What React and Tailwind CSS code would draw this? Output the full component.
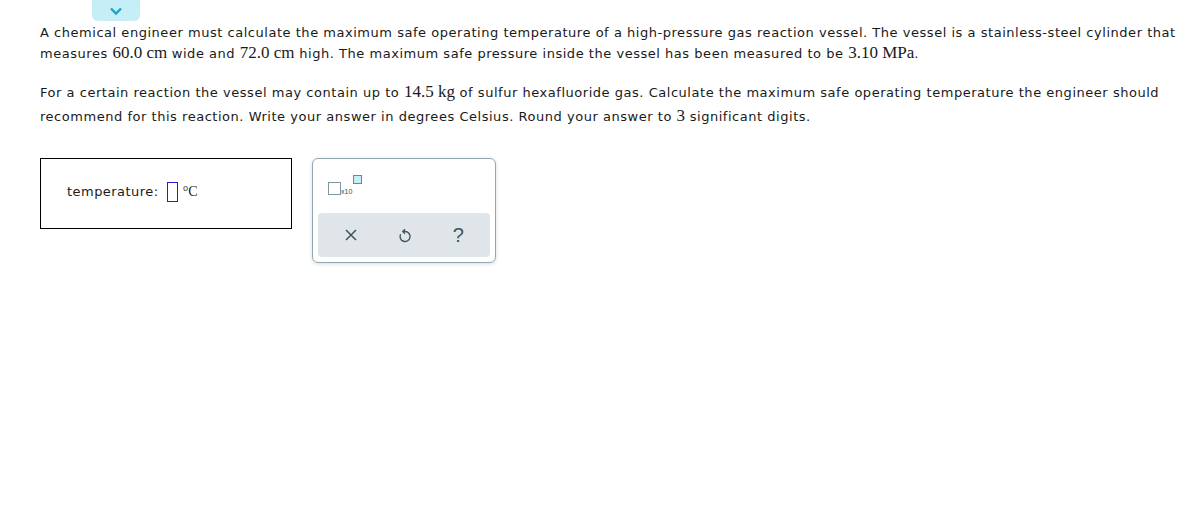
import React from 'react';

const M = ({ children }) => (
  <span className="text-[17px] leading-none tracking-normal" style={{ fontFamily: '"Liberation Serif", serif' }}>{children}</span>
);

export default function App() {
  return (
    <div className="w-[1188px] h-[506px] bg-white text-[#1a1a1a] relative" style={{ fontFamily: '"DejaVu Sans", Verdana, sans-serif' }}>
      {/* collapse tab */}
      <div className="absolute left-[92px] top-0 w-[48px] h-[21px] bg-[#c6eef6] rounded-b-[6px] flex items-center justify-center">
        <svg width="14" height="10" viewBox="0 0 14 10">
          <path d="M2 2.5 L7 7.5 L12 2.5" fill="none" stroke="#1ba3c8" strokeWidth="2.4" />
        </svg>
      </div>

      <div className="pl-[40px] pr-[6px] pt-[22px] text-[13px] tracking-[0.53px]">
        <p className="leading-[21px]">
          A chemical engineer must calculate the maximum safe operating temperature of a high-pressure gas reaction vessel. The vessel is a stainless-steel cylinder that measures <M>60.0 cm</M> wide and <M>72.0 cm</M> high. The maximum safe pressure inside the vessel has been measured to be <M>3.10 MPa</M>.
        </p>
        <p className="leading-[24px] mt-[17px]">
          For a certain reaction the vessel may contain up to <M>14.5 kg</M> of sulfur hexafluoride gas. Calculate the maximum safe operating temperature the engineer should recommend for this reaction. Write your answer in degrees Celsius. Round your answer to <M>3</M> significant digits.
        </p>

        <div className="flex items-start gap-[20px] mt-[29px] tracking-normal">
          <div className="w-[252px] h-[71px] border border-black flex items-center pl-[26px] pb-[4px]">
            <span className="text-[13px] tracking-[0.46px]">temperature:</span>
            <span className="inline-block w-[11px] h-[20px] border border-[#2a1bd8] ml-[8px]" />
            <span className="ml-[5px] text-[14px]" style={{ fontFamily: '"Liberation Serif", serif' }}>°C</span>
          </div>

          <div className="w-[184px] h-[105px] border border-[#8fa9b3] rounded-[6px] shadow-[0_1px_4px_rgba(0,0,0,0.15)] px-[5px] pb-[5px] flex flex-col">
            <div className="h-[54px] relative">
              <span className="absolute left-[10px] top-[23px] w-[13px] h-[13px] border-[1.5px] border-[#7f98a2]" />
              <span className="absolute left-[23px] top-[28px] text-[7px] text-[#37474f]" style={{ fontFamily: '"Liberation Sans", sans-serif' }}>x10</span>
              <span className="absolute left-[35px] top-[16px] w-[9px] h-[9px] border-[1.5px] border-[#1ba3c8] bg-[#c6eef6]" />
            </div>
            <div className="flex-1 bg-[#dfe5e8] rounded-[4px] flex items-center justify-around px-[6px]">
              <svg width="14" height="14" viewBox="0 0 14 14">
                <path d="M2 2 L12 12 M12 2 L2 12" stroke="#3d5560" strokeWidth="1.5" />
              </svg>
              <svg width="14" height="17" viewBox="0 0 14 17">
                <path d="M5 4.5 H7 A5 5 0 1 1 2.6 7.2" fill="none" stroke="#3d5560" strokeWidth="1.4" />
                <path d="M7 2.3 L4.8 4.5 L7 6.7" fill="none" stroke="#3d5560" strokeWidth="1.4" />
              </svg>
              <span className="text-[20px] text-[#3d5560] leading-none" style={{ fontFamily: '"Liberation Sans", sans-serif' }}>?</span>
            </div>
          </div>
        </div>
      </div>
    </div>
  );
}
